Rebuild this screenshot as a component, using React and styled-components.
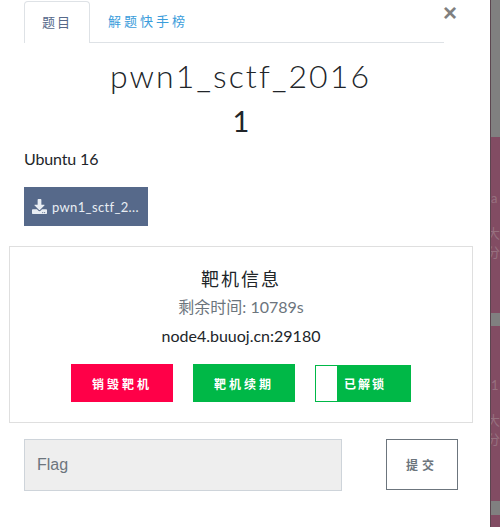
import React from 'react';
import styled, { createGlobalStyle } from 'styled-components';
import { FaDownload } from 'react-icons/fa';

const GlobalStyle = createGlobalStyle`
  html, body {
    margin: 0;
    padding: 0;
    background: #fff;
  }
  * { box-sizing: border-box; }
`;

const CJK = '"Noto Sans CJK SC", sans-serif';
const LATO = `Lato, ${CJK}`;

const Page = styled.div`
  display: flex;
  width: 500px;
  height: 527px;
  overflow: hidden;
  font-family: ${LATO};
  color: #212529;
`;

const Modal = styled.div`
  position: relative;
  width: 490px;
  flex: none;
  padding: 1px 17px 0 9px;
  background: #fff;
`;

const Close = styled.span`
  position: absolute;
  left: 443px;
  top: 1px;
  font-family: "Liberation Sans", sans-serif;
  font-size: 24px;
  line-height: 24px;
  font-weight: 700;
  color: #808080;
`;

const Tabs = styled.div`
  display: flex;
  margin: 0 29px 0 15px;
  height: 42px;
  border-bottom: 1px solid #dee2e6;
`;

const Tab = styled.div`
  display: flex;
  align-items: center;
  justify-content: center;
  width: ${props => props.active ? '66px' : 'auto'};
  height: ${props => props.active ? '42px' : '41px'};
  padding: ${props => props.active ? '0 0 3px' : '0 17px 3px'};
  font-family: ${CJK};
  font-size: 13px;
  letter-spacing: ${props => props.active ? '2px' : '3px'};
  color: ${props => props.active ? '#56698a' : '#3b9ddb'};
  background: ${props => props.active ? '#fff' : 'transparent'};
  border: 1px solid ${props => props.active ? '#dee2e6' : 'transparent'};
  border-bottom: 0;
  border-radius: 4px 4px 0 0;
`;

const Title = styled.h3`
  margin: 14px 0 0;
  padding-right: 1px;
  text-align: center;
  font-family: Lato, sans-serif;
  font-weight: 300;
  font-size: 32px;
  line-height: 38px;
  letter-spacing: 2.1px;
  color: #212529;
`;

const Score = styled.h4`
  margin: 9px 0 0;
  text-align: center;
  font-weight: 400;
  font-size: 29px;
  line-height: 34px;
`;

const Description = styled.p`
  margin: 9px 0 0 15px;
  font-size: 16px;
  line-height: 24px;
  letter-spacing: -0.15px;
`;

const Download = styled.a`
  display: flex;
  align-items: center;
  gap: 5px;
  width: 124px;
  height: 39px;
  margin: 16px 0 0 15px;
  padding-left: 8px;
  background: #56698a;
  color: #e8edf3;
  font-size: 13px;
  letter-spacing: 0.35px;
  white-space: nowrap;
`;

const Card = styled.div`
  display: flex;
  flex-direction: column;
  align-items: center;
  width: 464px;
  height: 177px;
  margin-top: 20px;
  padding-top: 18px;
  border: 1px solid #dfdfdf;
`;

const CardTitle = styled.div`
  font-family: ${CJK};
  font-size: 18px;
  line-height: 26px;
  letter-spacing: 2px;
`;

const Timer = styled.div`
  margin-top: 4px;
  font-size: 16px;
  line-height: 24px;
  color: #6c757d;
`;

const Host = styled.div`
  margin-top: 5px;
  font-size: 16px;
  line-height: 24px;
`;

const Actions = styled.div`
  display: flex;
  align-items: flex-end;
  gap: 20px;
  margin-top: 16px;
`;

const Action = styled.button`
  width: 102px;
  height: 38px;
  padding: 0;
  border: 0;
  font-family: ${CJK};
  font-size: 12px;
  font-weight: 700;
  letter-spacing: 3px;
  color: #fff;
  background: ${props => props.danger ? '#ff0048' : '#00b847'};
`;

const Toggle = styled.div`
  display: flex;
  align-items: center;
  width: 96px;
  height: 37px;
  background: #00b847;
  border: 1px solid #00b847;
`;

const Knob = styled.span`
  width: 21px;
  height: 35px;
  background: #fff;
`;

const ToggleLabel = styled.span`
  margin-left: 7px;
  font-family: ${CJK};
  font-size: 12px;
  font-weight: 700;
  letter-spacing: 2px;
  color: #fff;
`;

const FlagRow = styled.div`
  display: flex;
  gap: 44px;
  margin: 16px 0 0 15px;
`;

const FlagInput = styled.input`
  width: 318px;
  height: 52px;
  padding: 0 12px;
  background: #eee;
  border: 1px solid #ced4da;
  font-family: "Liberation Sans", sans-serif;
  font-size: 16px;
  &::placeholder {
    color: #6c757d;
    opacity: 1;
  }
`;

const Submit = styled.button`
  width: 72px;
  height: 51px;
  padding: 0;
  background: #fff;
  border: 1px solid #6c757d;
  font-family: ${CJK};
  font-size: 12px;
  font-weight: 700;
  letter-spacing: 4px;
  color: #6c757d;
`;

const Backdrop = styled.div`
  display: flex;
  flex-direction: column;
  flex: 1;
  border-left: 1px solid #5c4650;
`;

const Band = styled.div`
  flex: none;
  height: ${props => props.size}px;
  padding-top: ${props => props.pad || 0}px;
  overflow: hidden;
  background: ${props => props.grey ? '#808080' : '#824c63'};
  font-size: 13px;
  line-height: 19px;
  white-space: nowrap;
  color: #96707f;
`;

const BackdropText = styled.div`
  margin-left: ${props => props.shift}px;
  margin-top: ${props => props.gap || 0}px;
`;

const App = () => {
  return (
    <Page>
      <GlobalStyle />
      <Modal>
        <Close>×</Close>
        <Tabs>
          <Tab active>题目</Tab>
          <Tab>解题快手榜</Tab>
        </Tabs>
        <Title>pwn1_sctf_2016</Title>
        <Score>1</Score>
        <Description>Ubuntu 16</Description>
        <Download>
          <FaDownload size={15} />
          <span>pwn1_sctf_2...</span>
        </Download>
        <Card>
          <CardTitle>靶机信息</CardTitle>
          <Timer>剩余时间: 10789s</Timer>
          <Host>node4.buuoj.cn:29180</Host>
          <Actions>
            <Action danger>销毁靶机</Action>
            <Action>靶机续期</Action>
            <Toggle>
              <Knob />
              <ToggleLabel>已解锁</ToggleLabel>
            </Toggle>
          </Actions>
        </Card>
        <FlagRow>
          <FlagInput placeholder="Flag" />
          <Submit>提交</Submit>
        </FlagRow>
      </Modal>
      <Backdrop>
        <Band grey size={137} />
        <Band size={176} pad={52}>
          <BackdropText shift={0}>a</BackdropText>
          <BackdropText shift={-4} gap={16}>大</BackdropText>
          <BackdropText shift={-4}>分</BackdropText>
        </Band>
        <Band grey size={13} />
        <Band size={175} pad={50}>
          <BackdropText shift={0}>1</BackdropText>
          <BackdropText shift={-4} gap={16}>大</BackdropText>
          <BackdropText shift={-4}>分</BackdropText>
        </Band>
        <Band grey size={14} />
        <Band size={12} />
      </Backdrop>
    </Page>
  );
};

export default App;
